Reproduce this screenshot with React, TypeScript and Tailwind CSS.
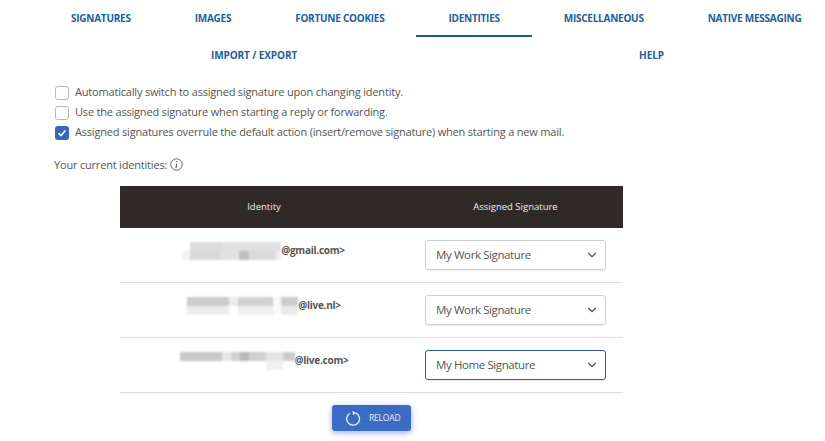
import { ChevronDown } from "lucide-react";

const TABS = ["Signatures", "Images", "Fortune Cookies", "Identities", "Miscellaneous", "Native Messaging"];

const OPTIONS = [
  { label: "Automatically switch to assigned signature upon changing identity.", checked: false },
  { label: "Use the assigned signature when starting a reply or forwarding.", checked: false },
  { label: "Assigned signatures overrule the default action (insert/remove signature) when starting a new mail.", checked: true },
];

// blurred-out part of each address, drawn as a couple of rows of grey cells
const ROWS = [
  {
    email: "@gmail.com>",
    signature: "My Work Signature",
    focused: false,
    top: ["w-[7px] bg-[#ffffff]", "w-[33px] bg-[#dcdcdc]", "w-[18px] bg-[#e2e2e2]", "w-[40px] bg-[#e0e0e0]"],
    bottom: ["w-[7px] bg-[#f2f2f2]", "w-[30px] bg-[#d8d8d8]", "w-[19px] bg-[#e2e2e2]", "w-[10px] bg-[#c0c0c0]", "w-[27px] bg-[#d9d9d9]", "w-[5px] bg-[#f0f0f0]"],
  },
  {
    email: "@live.nl>",
    signature: "My Work Signature",
    focused: false,
    top: ["w-[42px] bg-[#cbcbcb]", "w-[9px] bg-[#ececec]", "w-[35px] bg-[#d0d0d0]", "w-[8px] bg-[#fafafa]", "w-[17px] bg-[#cbcbcb]"],
    bottom: ["w-[42px] bg-[#ececec]", "w-[9px] bg-[#ffffff]", "w-[35px] bg-[#efefef]", "w-[8px] bg-[#fafafa]", "w-[17px] bg-[#ebebeb]"],
  },
  {
    email: "@live.com>",
    signature: "My Home Signature",
    focused: true,
    top: ["w-[42px] bg-[#c8c8c8]", "w-[9px] bg-[#e6e6e6]", "w-[9px] bg-[#d0d0d0]", "w-[9px] bg-[#b8b8b8]", "w-[17px] bg-[#cfcfcf]", "w-[17px] bg-[#e4e4e4]", "w-[12px] bg-[#cccccc]"],
    bottom: ["w-[86px] bg-[#ffffff]", "w-[17px] bg-[#f0f0f0]", "w-[12px] bg-[#ffffff]"],
  },
];

function Checkbox({ checked }: { checked: boolean }) {
  if (checked) {
    return (
      <span className="flex h-[14px] w-[14px] shrink-0 items-center justify-center rounded-[3px] bg-[#3a67bd]">
        <svg width="10" height="10" viewBox="0 0 10 10" fill="none">
          <path d="M1.5 5.2 4 7.6 8.6 2.2" stroke="#fff" strokeWidth="1.5" />
        </svg>
      </span>
    );
  }
  return <span className="h-[14px] w-[14px] shrink-0 rounded-[3px] border border-[#b8b8b8] bg-white" />;
}

function Redacted({ top, bottom }: { top: string[]; bottom: string[] }) {
  return (
    <div className="flex flex-col blur-[0.8px]">
      <div className="flex h-[9px]">
        {top.map((c, i) => (
          <div key={i} className={c} />
        ))}
      </div>
      <div className="flex h-[9px]">
        {bottom.map((c, i) => (
          <div key={i} className={c} />
        ))}
      </div>
    </div>
  );
}

export default function App() {
  return (
    <div className="h-[441px] w-[825px] overflow-hidden bg-white font-['Open_Sans','Noto_Sans',sans-serif] text-[#555]">
      {/* Tabs */}
      <div className="flex gap-[64px] pl-[71px] pt-[10px] text-[10px] font-bold uppercase tracking-[-0.25px] text-[#20609f]">
        {TABS.map((tab) => (
          <div key={tab} className="relative h-[27px] shrink-0 whitespace-nowrap leading-[16px]">
            {tab}
            {tab === "Identities" && <div className="absolute -left-[32px] -right-[32px] bottom-0 h-[2px] bg-[#1c5c9c]" />}
          </div>
        ))}
      </div>
      <div className="flex gap-[342px] pl-[211px] pt-[10px] text-[10px] font-bold uppercase leading-[16px] tracking-[-0.1px] text-[#20609f]">
        <div>Import / Export</div>
        <div>Help</div>
      </div>

      {/* Options */}
      <div className="flex flex-col gap-[3px] pl-[55px] pt-[21px] text-[11px] tracking-[-0.19px]">
        {OPTIONS.map((o) => (
          <div key={o.label} className="flex h-[17px] items-center gap-[6px] whitespace-nowrap">
            <Checkbox checked={o.checked} />
            {o.label}
          </div>
        ))}
      </div>

      <div className="flex items-center gap-[3px] pl-[54px] pt-[15px] text-[11px] leading-[17px] tracking-[-0.19px]">
        Your current identities:
        <svg width="13" height="13" viewBox="0 0 13 13" fill="none" stroke="#555">
          <circle cx="6.5" cy="6.5" r="5.7" strokeWidth="0.9" />
          <path d="M6.9 3.1v1.1M6.7 5.6 6 10" strokeWidth="1.1" />
        </svg>
      </div>

      {/* Table */}
      <div className="ml-[120px] mt-[13px] w-[503px]">
        <div className="flex h-[42px] items-center bg-[#2f2a28] text-[9.5px] font-medium text-[#eeeeee]">
          <div className="w-[288px] text-center">Identity</div>
          <div className="flex-1 text-center">Assigned Signature</div>
        </div>
        {ROWS.map((r) => (
          <div key={r.email} className="flex h-[55px] border-b border-[#dedede]">
            <div className="flex w-[288px] justify-center pt-[14px]">
              <div className="flex h-[17px] items-center text-[10px] font-bold tracking-[-0.25px]">
                <Redacted top={r.top} bottom={r.bottom} />
                {r.email}
              </div>
            </div>
            <div className="flex-1 px-[17px] pt-[12px]">
              <div
                className={
                  r.focused
                    ? "flex h-[30px] items-center justify-between rounded-[3px] border border-[#2f5f94] pl-[10px] pr-[6px] text-[11.5px] tracking-[-0.4px] shadow-[0_1px_1px_rgba(0,0,0,0.08)]"
                    : "flex h-[30px] items-center justify-between rounded-[3px] border border-[#cfcfcf] pl-[10px] pr-[6px] text-[11.5px] tracking-[-0.4px] shadow-[0_1px_1px_rgba(0,0,0,0.08)]"
                }
              >
                {r.signature}
                <ChevronDown size={14} strokeWidth={2} />
              </div>
            </div>
          </div>
        ))}
      </div>

      {/* Reload */}
      <div className="ml-[332px] mt-[12px] flex h-[26px] w-[79px] items-center gap-[8px] rounded-[3px] bg-[#3a6cc4] pl-[13px] text-[8.5px] font-medium tracking-[-0.2px] text-[#e8eefa] shadow-[0_2px_6px_rgba(58,108,196,0.5)]">
        <svg width="16" height="16" viewBox="0 0 16 16" fill="none" stroke="#eef3fc" strokeWidth="1.3">
          <path d="M10.6 2.9a6.4 6.4 0 1 1-5.6.3" />
          <path d="M7.6 0.8 10.8 2.9 8 5.2z" fill="#eef3fc" stroke="none" />
        </svg>
        RELOAD
      </div>
    </div>
  );
}
